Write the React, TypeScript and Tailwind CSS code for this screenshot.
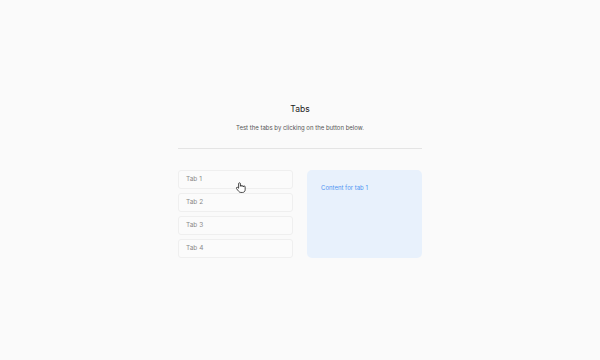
import { useState } from "react";

const tabs = ["Tab 1", "Tab 2", "Tab 3", "Tab 4"];

export default function App() {
  const [active, setActive] = useState(0);

  return (
    <main
      className="w-[600px] h-[360px] bg-[#fafafa] flex flex-col items-center relative"
      style={{ fontFamily: "Inter, 'Noto Sans', sans-serif" }}
    >
      <h1 className="mt-[103px] text-[8.5px] leading-[12px] text-[#1a1a1a]">Tabs</h1>
      <p className="mt-[8px] text-[6px] leading-[9px] text-[#555]">
        Test the tabs by clicking on the button below.
      </p>
      <div className="mt-[16px] w-[244px] h-px bg-[#e4e4e4]" />

      <div className="mt-[21px] w-[244px] grid grid-cols-2 gap-[14px]">
        {/* 탭 버튼 목록 */}
        <div className="flex flex-col gap-[4px]">
          {tabs.map((tab, i) => (
            <button
              key={tab}
              onClick={() => setActive(i)}
              className="h-[19px] px-[7px] text-left text-[6.5px] leading-[9px] text-[#8a8a8a] bg-[#fbfbfb] border border-[#efefef] rounded-[3px]"
            >
              {tab}
            </button>
          ))}
        </div>

        {/* 탭 내용 */}
        <div className="h-[88px] rounded-[5px] bg-[#e8f1fc] px-[14px] py-[13px]">
          <p className="text-[6px] leading-[9px] text-[#4f95f2]">
            Content for tab {active + 1}
          </p>
        </div>
      </div>

      {/* 마우스 커서 */}
      <svg
        className="absolute left-[236px] top-[182px]"
        width="10"
        height="11"
        viewBox="0 0 20 22"
      >
        <path
          d="M7 1.5c-1 0-1.8.8-1.8 1.8v9.2L3.6 11c-.8-.7-2-.6-2.6.2-.5.6-.5 1.5 0 2.1l4.6 5.6c1 1.3 2.5 2 4.1 2h3.4c2.9 0 5.2-2.3 5.2-5.2V9.6c0-.9-.7-1.6-1.6-1.6s-1.6.7-1.6 1.6V9c0-.9-.7-1.6-1.6-1.6S12 8.1 12 9v-.5c0-.9-.7-1.6-1.6-1.6s-1.6.7-1.6 1.6V3.3C8.8 2.3 8 1.5 7 1.5z"
          fill="#fff"
          stroke="#000"
          strokeWidth="1.4"
          strokeLinejoin="round"
        />
      </svg>
    </main>
  );
}
